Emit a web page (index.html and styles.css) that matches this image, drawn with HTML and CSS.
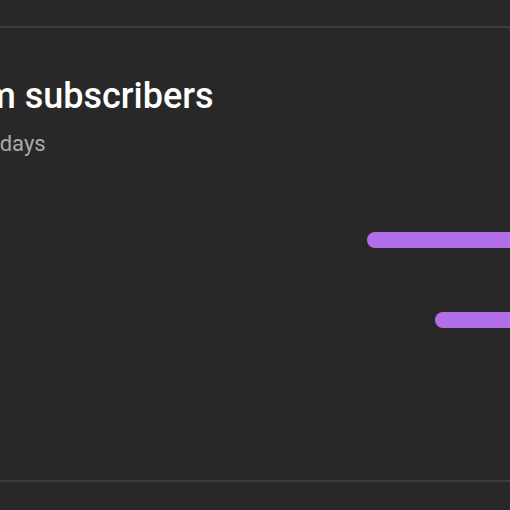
FILE: index.html
```html
<!DOCTYPE html>
<html lang="en">
<head>
<meta charset="utf-8">
<title>Watch time from subscribers</title>
<link rel="stylesheet" href="styles.css">
</head>
<body>
<div class="page">
  <section class="card">
    <header class="card-header">
      <h2 class="title">Watch time from subscribers</h2>
      <p class="subtitle">Total watch time: Last 28 days</p>
    </header>
    <div class="chart">
      <div class="row"><div class="bar" style="width:205px"></div></div>
      <div class="row"><div class="bar" style="width:137px"></div></div>
    </div>
  </section>
</div>
</body>
</html>
```

FILE: styles.css
```css
html, body {
  margin: 0;
  padding: 0;
  background: #282828;
  overflow: hidden;
  font-family: Roboto, "Liberation Sans", sans-serif;
}
.page {
  width: 510px;
  height: 510px;
  overflow: hidden;
  padding-top: 26px;
  box-sizing: border-box;
}
.card {
  margin-left: -252px;
  width: 824px;
  height: 456px;
  box-sizing: border-box;
  border-top: 2px solid #3d3d3d;
  border-bottom: 2px solid #3d3d3d;
  display: flex;
  flex-direction: column;
}
.card-header {
  padding-top: 46px;
}
.title {
  margin: 0;
  font-size: 36px;
  line-height: 44px;
  font-weight: 500;
  color: #ffffff;
}
.subtitle {
  margin: 12px 0 0;
  font-size: 22px;
  line-height: 28px;
  color: #aaaaaa;
}
.chart {
  display: flex;
  flex-direction: column;
  gap: 64px;
  margin-top: 74px;
}
.row {
  display: flex;
  justify-content: flex-end;
  height: 16px;
}
.bar {
  height: 16px;
  border-radius: 8px;
  background: #b26ee8;
}
```
